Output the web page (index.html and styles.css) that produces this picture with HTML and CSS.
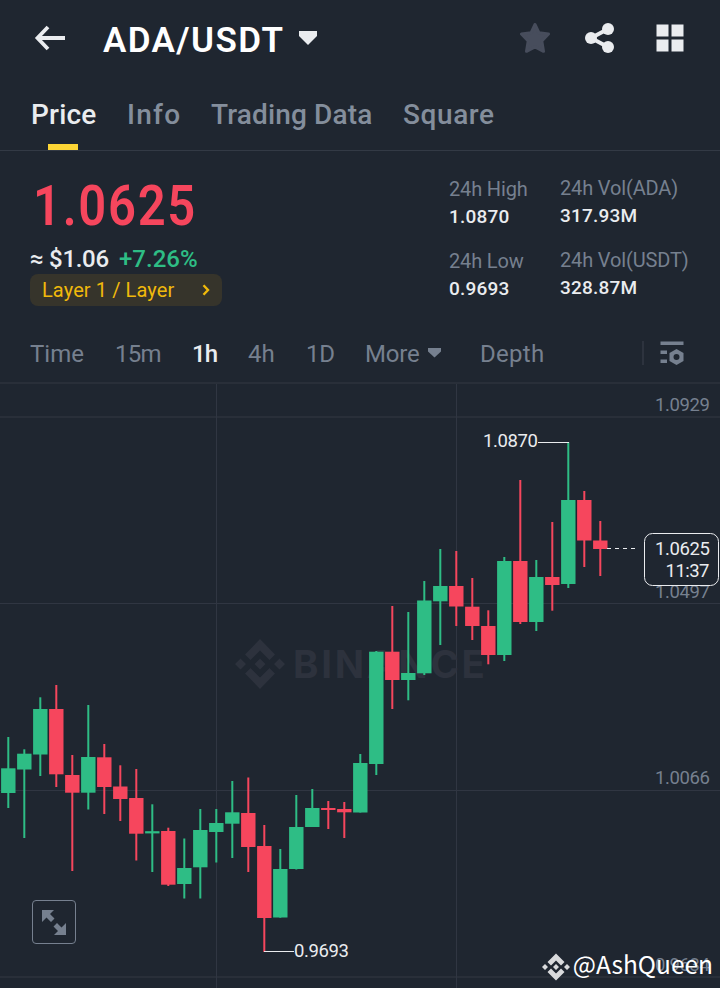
FILE: index.html
```html
<!DOCTYPE html>
<html lang="en">
<head>
    <meta charset="UTF-8">
    <meta name="viewport" content="width=device-width, initial-scale=1.0">
    <title>ADA/USDT</title>
    <link rel="stylesheet" href="styles.css">
</head>
<body>
    <header class="topbar">
        <svg class="back" width="32" height="26" viewBox="0 0 32 26">
            <path d="M14 2 L3.5 13 L14 24 M3 13 H31" fill="none" stroke="#eaecef" stroke-width="3.8"/>
        </svg>
        <h1>ADA/USDT</h1>
        <svg class="caret" width="18" height="14" viewBox="0 0 18 14">
            <path d="M0 0 H18 V5 L9 14 L0 5 Z" fill="#eaecef"/>
        </svg>
        <div class="actions">
            <svg width="30" height="30" viewBox="0 0 30 30">
                <path d="M15 1.5 L19 9.8 L28.5 11 L21.8 18 L23.5 28.3 L15 24 L6.5 28.3 L8.2 18 L1.5 11 L11 9.8 Z" fill="#474d5c" stroke="#474d5c" stroke-width="3" stroke-linejoin="round"/>
            </svg>
            <svg width="30" height="30" viewBox="0 0 30 30">
                <path d="M23 6 L6 15 L23 24" fill="none" stroke="#eaecef" stroke-width="4"/>
                <circle cx="23" cy="6" r="6" fill="#eaecef"/>
                <circle cx="6" cy="15" r="6" fill="#eaecef"/>
                <circle cx="23" cy="24" r="6" fill="#eaecef"/>
            </svg>
            <svg class="apps" width="28" height="28" viewBox="0 0 28 28">
                <path d="M.5 .5 H12.5 V12.5 H.5 Z M15.5 .5 H27.5 V12.5 H15.5 Z M.5 15.5 H12.5 V27.5 H.5 Z M15.5 15.5 H27.5 V27.5 H15.5 Z" fill="#eaecef"/>
            </svg>
        </div>
    </header>

    <nav class="tabs">
        <a class="tab active">Price</a>
        <a class="tab info">Info</a>
        <a class="tab trading">Trading Data</a>
        <a class="tab square">Square</a>
    </nav>

    <section class="ticker">
        <div class="price-box">
            <div class="price">1.0625</div>
            <div class="sub"><span class="fiat">≈ $1.06</span><span class="change">+7.26%</span></div>
            <div class="tag">
                <span>Layer 1 / Layer</span>
                <svg width="8" height="12" viewBox="0 0 8 12">
                    <path d="M1.5 1.2 L6 6 L1.5 10.8" fill="none" stroke="#f0b90b" stroke-width="2.4"/>
                </svg>
            </div>
        </div>
        <div class="stats">
            <div class="stat"><span class="label">24h High</span><span class="value">1.0870</span></div>
            <div class="stat"><span class="label">24h Low</span><span class="value">0.9693</span></div>
        </div>
        <div class="stats vol">
            <div class="stat"><span class="label">24h Vol(ADA)</span><span class="value">317.93M</span></div>
            <div class="stat"><span class="label">24h Vol(USDT)</span><span class="value">328.87M</span></div>
        </div>
    </section>

    <nav class="intervals">
        <a class="time">Time</a>
        <a class="m15">15m</a>
        <a class="h1 active">1h</a>
        <a class="h4">4h</a>
        <a class="d1">1D</a>
        <a class="more">More
            <svg width="13" height="10" viewBox="0 0 13 10"><path d="M0 0 H13 V3.5 L6.5 9.5 L0 3.5 Z" fill="#76808f"/></svg>
        </a>
        <a class="depth">Depth</a>
        <svg class="settings" width="24" height="24" viewBox="0 0 24 24">
            <path d="M.5 .5 H23.5 V4 H.5 Z M.5 9.5 H7 V13 H.5 Z M.5 18.5 H7 V22 H.5 Z" fill="#76808f"/>
            <path d="M16.5 8 L23.5 12 V20 L16.5 24 L9.5 20 V12 Z M16.5 13 A3 3 0 1 0 16.5 19 A3 3 0 1 0 16.5 13 Z" fill="#76808f" fill-rule="evenodd"/>
        </svg>
    </nav>

    <main class="chart">
        <!-- y runs from 383 so the plot shares its origin with the page -->
        <svg class="plot" width="720" height="605" viewBox="0 383 720 605">
            <g class="grid">
                <path class="edge" d="M0 417 H720 M0 977 H720"/>
                <path d="M0 603.5 H720 M0 790.5 H720 M216.5 384 V988 M456.5 384 V988"/>
            </g>

            <g class="logo">
                <path d="M245 654.5 L260 639 L275 654.5 L269.5 660 L260 650.5 L250.5 660 Z"/>
                <path d="M245 673.5 L260 689 L275 673.5 L269.5 668 L260 677.5 L250.5 668 Z"/>
                <path d="M235 664 L240.5 658.5 L246 664 L240.5 669.5 Z M274 664 L279.5 658.5 L285 664 L279.5 669.5 Z M254.5 664 L260 658.5 L265.5 664 L260 669.5 Z"/>
                <text x="293" y="678" textLength="192">BINANCE</text>
            </g>

            <g class="axis">
                <text x="655" y="411" textLength="55">1.0929</text>
                <text x="655" y="598" textLength="55">1.0497</text>
                <text x="655" y="784" textLength="55">1.0066</text>
                <text x="655" y="971" textLength="55">0.9634</text>
            </g>

            <g id="candles"></g>

            <path class="marker" d="M538 442.5 H569 M264 951.5 H294"/>
            <path class="marker" d="M607 548.5 H636" stroke-dasharray="4 4"/>
            <text class="note" x="483" y="447" textLength="55">1.0870</text>
            <text class="note" x="294" y="957" textLength="55">0.9693</text>

            <rect class="last" x="644.5" y="533.5" width="74" height="52" rx="8"/>
            <text class="note" x="655" y="555" textLength="55">1.0625</text>
            <text class="note" x="665.5" y="577" textLength="44">11:37</text>
        </svg>

        <div class="expand">
            <svg width="24" height="25" viewBox="0 0 24 25">
                <path d="M0 0 H12 L8 4 L12.5 8.5 L9 12 L4.5 7.5 L0 12 Z M24 25 H12 L16 21 L11.5 16.5 L15 13 L19.5 17.5 L24 13 Z" fill="#76808f"/>
            </svg>
        </div>

        <div class="author">
            <svg width="28" height="28" viewBox="0 0 28 28">
                <path d="M5.5 9 L14 .5 L22.5 9 L19 12.5 L14 7.5 L9 12.5 Z M5.5 19 L14 27.5 L22.5 19 L19 15.5 L14 20.5 L9 15.5 Z M0 14 L3 11 L6 14 L3 17 Z M22 14 L25 11 L28 14 L25 17 Z M11 14 L14 11 L17 14 L14 17 Z" fill="#d9dadc"/>
            </svg>
            <span>@AshQueen</span>
        </div>
    </main>

    <script>
        // high, body top, body bottom, low, up
        var candles = [
            [737, 768.3, 793, 808, 1],
            [749.3, 753.7, 769.5, 838, 1],
            [697.3, 709, 754.5, 776, 1],
            [685, 709, 774.3, 787, 0],
            [755, 775, 792.7, 871, 0],
            [705, 757, 792.7, 809.5, 1],
            [744, 757.3, 787, 814, 0],
            [765.3, 786.5, 799, 821, 0],
            [769, 798, 833.7, 860.5, 0],
            [804.3, 831.2, 833.4, 872, 1],
            [827.7, 831, 884.7, 886, 0],
            [838.5, 868, 884, 898.5, 1],
            [809, 830, 867.3, 898.5, 1],
            [809, 823, 832, 862.5, 1],
            [781, 812.3, 823.7, 858, 1],
            [777.5, 813, 847, 872, 0],
            [825, 846, 918, 952, 0],
            [849, 869, 917.5, 917.7, 1],
            [795, 827, 869, 869.5, 1],
            [789, 808, 827, 827, 1],
            [801, 808, 810, 829, 0],
            [802, 809, 812.3, 838, 0],
            [754, 763, 812.5, 812.5, 1],
            [651, 651.7, 764, 775, 1],
            [606, 651.7, 680, 709, 0],
            [612, 673, 680, 700.3, 1],
            [581, 600.5, 673.3, 675, 1],
            [549, 586, 601.3, 645, 1],
            [551, 586, 606.5, 626, 0],
            [578, 606.7, 626, 640, 0],
            [610.3, 626, 655, 664.3, 0],
            [557, 561, 655, 661, 1],
            [480, 561, 622, 624, 0],
            [560, 577, 622, 631, 1],
            [522, 577, 585, 610.7, 0],
            [442, 500, 584, 588, 1],
            [491, 500, 540.5, 567, 0],
            [521, 540.5, 549, 576, 0]
        ];

        var html = "";
        candles.forEach(function(c, i) {
            var x = 8.3 + i * 16;
            html += '<g class="' + (c[4] ? "up" : "down") + '">' +
                '<rect x="' + (x - 1) + '" y="' + c[0] + '" width="2" height="' + (c[3] - c[0]) + '"/>' +
                '<rect x="' + (x - 7.2) + '" y="' + c[1] + '" width="14.4" height="' + (c[2] - c[1]) + '"/></g>';
        });
        document.getElementById("candles").innerHTML = html;
    </script>
</body>
</html>
```

FILE: styles.css
```css
* {
    box-sizing: border-box;
}
body {
    margin: 0;
    width: 720px;
    height: 988px;
    overflow: hidden;
    background-color: #1f2630;
    color: #eaecef;
    font-family: Roboto, "Liberation Sans", sans-serif;
}
svg {
    display: block;
    flex: none;
}
.topbar {
    display: flex;
    align-items: center;
    height: 76px;
    padding: 0 36px 0 34px;
}
.topbar h1 {
    margin: 0 0 0 37px;
    padding-top: 5px;
    width: 180px;
    font-size: 35px;
    font-weight: 600;
    line-height: 40px;
    letter-spacing: 1.4px;
    color: #fff;
    white-space: nowrap;
}
.caret {
    margin-left: 16px;
}
.actions {
    display: flex;
    align-items: center;
    gap: 35px;
    margin-left: auto;
}
.apps {
    margin-left: 6px;
}
.tabs {
    display: flex;
    height: 75px;
    padding-left: 31px;
    border-bottom: 1px solid #333a45;
    font-size: 28px;
    font-weight: 500;
    line-height: 78px;
    color: #848e9c;
}
.tab {
    white-space: nowrap;
}
.tab.active {
    display: flex;
    flex-direction: column;
    width: 96px;
    color: #eaecef;
    letter-spacing: 0.2px;
}
.tab.active::after {
    content: "";
    width: 30px;
    height: 6px;
    margin: -10px 0 0 17px;
    flex: none;
    background-color: #fcd535;
}
.tab.info {
    width: 84px;
    letter-spacing: 1.3px;
}
.tab.trading {
    width: 192px;
    letter-spacing: 0.15px;
}
.tab.square {
    letter-spacing: 0.6px;
}
.ticker {
    display: flex;
    height: 171px;
    padding: 22px 0 0 30px;
}
.price-box {
    width: 419px;
}
.price {
    height: 66px;
    padding-left: 3px;
    font-size: 55px;
    font-weight: 600;
    line-height: 66px;
    letter-spacing: 1.9px;
    color: #f6465d;
    transform: scaleX(0.89);
    transform-origin: 4px 0;
}
.sub {
    display: flex;
    height: 35px;
    font-size: 24px;
    font-weight: 500;
    line-height: 40px;
}
.fiat {
    width: 89px;
    letter-spacing: -0.3px;
}
.change {
    color: #2ebd85;
}
.tag {
    display: flex;
    align-items: center;
    justify-content: space-between;
    width: 192px;
    height: 32px;
    padding: 0 12px;
    border-radius: 8px;
    background-color: #36342b;
    color: #f0b90b;
    font-size: 20px;
    letter-spacing: 0.1px;
}
.stats {
    width: 111px;
}
.vol {
    width: 140px;
    margin-top: -1px;
}
.stat {
    display: flex;
    flex-direction: column;
    height: 72px;
    padding-top: 2px;
    white-space: nowrap;
}
.label {
    font-size: 20px;
    line-height: 28px;
    letter-spacing: -0.15px;
    color: #76808f;
}
.value {
    font-size: 19px;
    font-weight: 500;
    line-height: 28px;
    letter-spacing: 0.2px;
}
.intervals {
    display: flex;
    height: 62px;
    padding-left: 30px;
    border-bottom: 2px solid #292f39;
    font-size: 24px;
    line-height: 65px;
    color: #76808f;
    white-space: nowrap;
}
.intervals .active {
    color: #eaecef;
    font-weight: 500;
}
.time {
    width: 85px;
}
.m15 {
    width: 77px;
    letter-spacing: -0.8px;
}
.h1 {
    width: 56px;
    letter-spacing: -0.8px;
}
.h4 {
    width: 58px;
}
.d1 {
    width: 59px;
    letter-spacing: -0.3px;
}
.more {
    display: flex;
    gap: 9px;
    width: 115px;
    letter-spacing: -0.2px;
}
.more svg {
    margin-top: 26px;
}
.depth {
    width: 162px;
    letter-spacing: 0.3px;
}
.settings {
    box-sizing: content-box;
    margin-top: 19px;
    padding-left: 16px;
    border-left: 2px solid #2d333e;
}
.chart {
    position: relative;
    height: 605px;
    margin-top: -1px;
}
.plot text {
    font-family: Roboto, sans-serif;
    font-size: 18.5px;
}
.grid path {
    fill: none;
    stroke: #303642;
}
.grid .edge {
    stroke: #292f39;
    stroke-width: 2;
}
.logo {
    fill: #2d323d;
}
.plot .logo text {
    font-family: Inter, sans-serif;
    font-size: 38.5px;
    font-weight: 700;
}
.axis {
    fill: #76808f;
}
.up {
    fill: #2ebd85;
}
.down {
    fill: #f6465d;
}
.marker {
    fill: none;
    stroke: #eaecef;
}
.note {
    fill: #eaecef;
}
.last {
    fill: #1f2630;
    stroke: #eaecef;
}
.expand {
    position: absolute;
    left: 32px;
    top: 517px;
    display: flex;
    align-items: center;
    justify-content: center;
    width: 44px;
    height: 44px;
    border: 1px solid #76808f;
    border-radius: 4px;
}
.author {
    position: absolute;
    right: 7px;
    bottom: 6px;
    display: flex;
    align-items: center;
    gap: 3px;
    font-family: "Noto Sans CJK SC", "Noto Sans", sans-serif;
    font-size: 24.5px;
    line-height: 36px;
    color: #fff;
}
.author span {
    margin-top: -5px;
}
```
